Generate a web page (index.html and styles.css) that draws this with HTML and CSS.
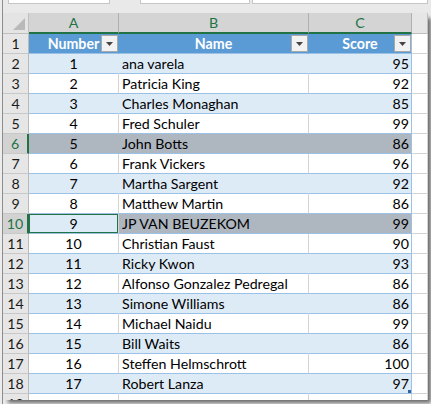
FILE: index.html
```html
<!DOCTYPE html>
<html>
<head>
<meta charset="utf-8">
<link rel="stylesheet" href="styles.css">
</head>
<body>
<div class="page">
  <div class="topbar">
    <div class="box b1"></div>
    <div class="box b2"></div>
    <div class="box b3"></div>
  </div>
  <div class="sheet">
    <div class="row colhdr">
      <div class="corner"><svg width="13" height="13" viewBox="0 0 13 13"><polygon points="12,0 12,12 0,12" fill="#b9b9b9"/></svg></div>
      <div class="ch sel">A</div>
      <div class="ch sel">B</div>
      <div class="ch sel">C</div>
      <div class="ch"></div>
    </div>
    <div class="row thead">
      <div class="rh">1</div>
      <div class="c th">Number<span class="fb"><svg width="7" height="4" viewBox="0 0 7 4"><polygon points="0,0 7,0 3.5,4" fill="#444"/></svg></span></div>
      <div class="c th">Name<span class="fb"><svg width="7" height="4" viewBox="0 0 7 4"><polygon points="0,0 7,0 3.5,4" fill="#444"/></svg></span></div>
      <div class="c th last">Score<span class="fb"><svg width="7" height="4" viewBox="0 0 7 4"><polygon points="0,0 7,0 3.5,4" fill="#444"/></svg></span></div>
      <div class="x"></div>
    </div>
    <div class="row band"><div class="rh">2</div><div class="c n">1</div><div class="c t">ana varela</div><div class="c s">95</div><div class="x"></div></div>
    <div class="row"><div class="rh">3</div><div class="c n">2</div><div class="c t">Patricia King</div><div class="c s">92</div><div class="x"></div></div>
    <div class="row band"><div class="rh">4</div><div class="c n">3</div><div class="c t">Charles Monaghan</div><div class="c s">85</div><div class="x"></div></div>
    <div class="row"><div class="rh">5</div><div class="c n">4</div><div class="c t">Fred Schuler</div><div class="c s">99</div><div class="x"></div></div>
    <div class="row picked"><div class="rh">6</div><div class="c n">5</div><div class="c t">John Botts</div><div class="c s">86</div><div class="x"></div></div>
    <div class="row"><div class="rh">7</div><div class="c n">6</div><div class="c t">Frank Vickers</div><div class="c s">96</div><div class="x"></div></div>
    <div class="row band"><div class="rh">8</div><div class="c n">7</div><div class="c t">Martha Sargent</div><div class="c s">92</div><div class="x"></div></div>
    <div class="row"><div class="rh">9</div><div class="c n">8</div><div class="c t">Matthew Martin</div><div class="c s">86</div><div class="x"></div></div>
    <div class="row picked"><div class="rh">10</div><div class="c n active">9</div><div class="c t">JP VAN BEUZEKOM</div><div class="c s">99</div><div class="x"></div></div>
    <div class="row"><div class="rh">11</div><div class="c n">10</div><div class="c t">Christian Faust</div><div class="c s">90</div><div class="x"></div></div>
    <div class="row band"><div class="rh">12</div><div class="c n">11</div><div class="c t">Ricky Kwon</div><div class="c s">93</div><div class="x"></div></div>
    <div class="row"><div class="rh">13</div><div class="c n">12</div><div class="c t">Alfonso Gonzalez Pedregal</div><div class="c s">86</div><div class="x"></div></div>
    <div class="row band"><div class="rh">14</div><div class="c n">13</div><div class="c t">Simone Williams</div><div class="c s">86</div><div class="x"></div></div>
    <div class="row"><div class="rh">15</div><div class="c n">14</div><div class="c t">Michael Naidu</div><div class="c s">99</div><div class="x"></div></div>
    <div class="row band"><div class="rh">16</div><div class="c n">15</div><div class="c t">Bill Waits</div><div class="c s">86</div><div class="x"></div></div>
    <div class="row"><div class="rh">17</div><div class="c n">16</div><div class="c t">Steffen Helmschrott</div><div class="c s">100</div><div class="x"></div></div>
    <div class="row band"><div class="rh">18</div><div class="c n">17</div><div class="c t">Robert Lanza</div><div class="c s end">97<span class="handle"></span></div><div class="x"></div></div>
    <div class="row plain"><div class="rh">19</div><div class="c"></div><div class="c"></div><div class="c"></div><div class="x"></div></div>
  </div>
</div>
</body>
</html>
```
FILE: styles.css
```css
html, body {
  margin: 0;
  padding: 0;
}
body {
  width: 431px;
  height: 404px;
  overflow: hidden;
  background: #ececec;
  font-family: Lato, "Liberation Sans", sans-serif;
  font-size: 14.2px;
  color: #000;
}
.page {
  margin-left: 2px;
  border-left: 1px solid #8e8e8e;
  height: 404px;
  width: 428px;
}
.topbar {
  height: 13px;
  display: flex;
  align-items: flex-start;
  background: #e9e9e9;
}
.box {
  height: 3px;
  background: #fff;
  border: 1px solid #c6c6c6;
  border-top: none;
}
.b1 { margin-left: 5px; width: 100px; }
.b2 { margin-left: 30px; width: 108px; }
.b3 { margin-left: 2px; width: 174px; }
.sheet {
  height: 387px;
  width: 425px;
  overflow: hidden;
  background: #fff;
  box-shadow: 4px 4px 4px -1px rgba(0, 0, 0, 0.55);
}
.row {
  display: grid;
  grid-template-columns: 26px 90px 190px 103px 16px;
  height: 20px;
}
.row > div {
  box-sizing: border-box;
  height: 100%;
  border-right: 1px solid #d4d4d4;
  border-bottom: 1px solid #d4d4d4;
  line-height: 19px;
  white-space: nowrap;
  overflow: hidden;
}
.colhdr { height: 21px; }
.colhdr > div {
  line-height: 19px;
  text-align: center;
  color: #217346;
  background: #e6e6e6;
  border-right-color: #bfbfbf;
  border-bottom: 1px solid #bfbfbf;
}
.colhdr .corner {
  display: flex;
  justify-content: flex-end;
  align-items: flex-end;
  padding: 0 2px 2px 0;
  background: #e4e4e4;
}
.colhdr .corner svg { display: block; }
.colhdr .sel {
  background: #d4d4d4;
  border-right-color: #b0b0b0;
  border-bottom: 2px solid #217346;
}
.rh {
  text-align: center;
  background: #e6e6e6;
  color: #1a1a1a;
  border-right-color: #bababa !important;
  border-bottom-color: #c8c8c8 !important;
}
.c.n { text-align: center; }
.c.t { padding-left: 3px; }
.c.s { padding-right: 2px; text-align: right; border-right-color: #9bc2e6; }
.c { border-bottom-color: #9bc2e6 !important; }
.x { background: #fff; }
.th {
  position: relative;
  background: #5b9bd5;
  color: #fff;
  font-weight: bold;
  text-align: center;
  border-right-color: #5b9bd5 !important;
}
.th.last { border-right-color: #9bc2e6 !important; }
.fb {
  position: absolute;
  right: 0;
  top: 1px;
  width: 17px;
  height: 17px;
  box-sizing: border-box;
  background: #f2f2f2;
  border: 1px solid #a8a8a8;
  display: flex;
  align-items: center;
  justify-content: center;
}
.fb svg { display: block; }
.band .c { background: #ddebf7; border-right-color: #ddebf7; }
.band .c.s { border-right-color: #9bc2e6; }
.picked .c { background: #aeb6bf; border-right-color: #aeb6bf; }
.picked .c.s { border-right-color: #9bc2e6; }
.picked .rh {
  background: #d2d2d2;
  color: #217346;
  border-right: 2px solid #217346 !important;
}
.picked .c.active {
  background: #ddebf7;
  border-right-color: #d4d4d4;
  box-shadow: inset 0 0 0 1px #217346;
}
.plain .c { border-bottom-color: #d4d4d4 !important; }
.plain .c:nth-child(4) { border-right-color: #d4d4d4; }
.end { position: relative; }
.handle {
  position: absolute;
  right: 0;
  bottom: 0;
  width: 3px;
  height: 3px;
  background: #2e64a8;
}
```
